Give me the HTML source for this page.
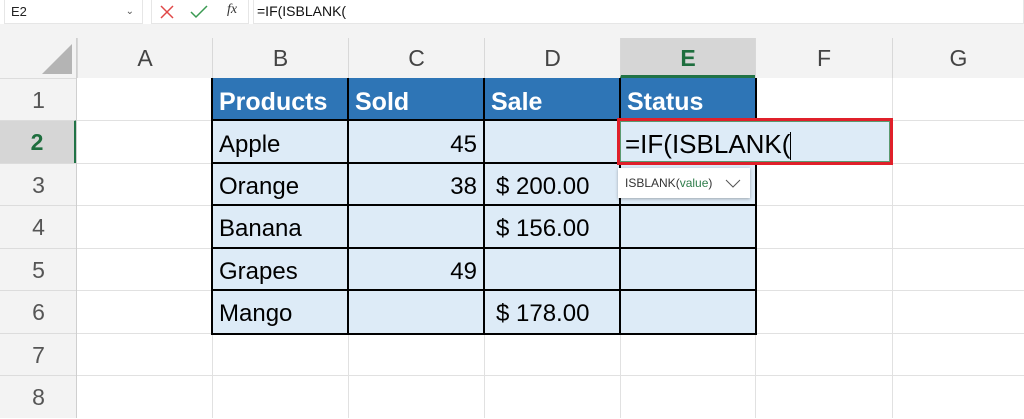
<!DOCTYPE html><html><head><style>
body{margin:0;width:1024px;height:418px;overflow:hidden;background:#fff;font-family:"Liberation Sans",sans-serif;position:relative}
div{position:absolute;box-sizing:border-box}
.ch{top:38px;height:40px;font-size:23px;color:#444;text-align:center;line-height:40px;border-left:1px solid #d8d8d8}
.rh{left:0;width:77px;font-size:23px;color:#555;text-align:center;background:#f3f3f3;border-top:1px solid #dcdcdc}
.vl{top:78px;height:340px;width:1px;background:#e1e1e1}
.hl{left:77px;width:947px;height:1px;background:#e1e1e1}
.c{font-size:24px;color:#000;line-height:42px;padding:0 6px;white-space:nowrap;margin-top:2px}
</style></head><body>
<div style="left:0;top:0;width:1024px;height:24px;background:#fff"></div>
<div style="left:0;top:24px;width:1024px;height:54px;background:#f3f3f3"></div>
<div style="left:4px;top:0;width:139px;height:24px;border:1px solid #e6e6e6;border-top:none;font-size:13px;line-height:24px;padding-left:6px;color:#222">E2<span style="position:absolute;right:8px;top:0;font-size:10px;color:#555">&#8964;</span></div>
<div style="left:151px;top:0;width:98px;height:24px;border:1px solid #e6e6e6;border-top:none"></div>
<svg style="position:absolute;left:160px;top:5px" width="14" height="14"><path d="M1 1L13 13M13 1L1 13" stroke="#e04848" stroke-width="1.5"/></svg>
<svg style="position:absolute;left:190px;top:5px" width="18" height="14"><path d="M1 7L6 12L17 1" stroke="#3a9a52" stroke-width="1.5" fill="none"/></svg>
<div style="left:227px;top:2px;font-family:'Liberation Serif',serif;font-style:italic;font-size:14px;color:#333">fx</div>
<div style="left:253px;top:0;width:771px;height:24px;border:1px solid #e6e6e6;border-top:none;font-size:14px;line-height:22px;padding-left:3px;color:#111">=IF(ISBLANK(</div>
<svg style="position:absolute;left:40px;top:44px" width="32" height="30"><path d="M32 0L32 30L2 30Z" fill="#b4b4b4"/></svg>
<div class="ch" style="left:77px;width:135px">A</div>
<div class="ch" style="left:212px;width:136px">B</div>
<div class="ch" style="left:348px;width:136px">C</div>
<div class="ch" style="left:484px;width:136px">D</div>
<div class="ch" style="left:620px;width:135px;background:#d6d6d6;color:#1e6e3e;font-weight:bold;border-bottom:3px solid #217346">E</div>
<div class="ch" style="left:755px;width:137px">F</div>
<div class="ch" style="left:892px;width:132px">G</div>
<div class="rh" style="top:78px;height:42px;line-height:42px">1</div>
<div class="rh" style="top:120px;height:43px;line-height:43px;background:#d6d6d6;color:#1e6e3e;font-weight:bold;border-right:3px solid #217346">2</div>
<div class="rh" style="top:163px;height:42px;line-height:42px">3</div>
<div class="rh" style="top:205px;height:43px;line-height:43px">4</div>
<div class="rh" style="top:248px;height:42px;line-height:42px">5</div>
<div class="rh" style="top:290px;height:43px;line-height:43px">6</div>
<div class="rh" style="top:333px;height:42px;line-height:42px">7</div>
<div class="rh" style="top:375px;height:43px;line-height:43px">8</div>
<div style="left:76px;top:38px;width:1px;height:380px;background:#cfcfcf"></div>
<div class="vl" style="left:212px"></div><div class="vl" style="left:348px"></div><div class="vl" style="left:484px"></div><div class="vl" style="left:620px"></div><div class="vl" style="left:755px"></div><div class="vl" style="left:892px"></div>
<div class="hl" style="top:120px"></div><div class="hl" style="top:163px"></div><div class="hl" style="top:205px"></div><div class="hl" style="top:248px"></div><div class="hl" style="top:290px"></div><div class="hl" style="top:333px"></div><div class="hl" style="top:375px"></div>
<div style="left:211px;top:78px;width:546px;height:257px;background:#ddebf7;border:2px solid #000"></div>
<div style="left:213px;top:78px;width:542px;height:42px;background:#2e75b6"></div>
<div style="left:211px;top:119px;width:546px;height:2px;background:#000"></div>
<div style="left:211px;top:162px;width:546px;height:2px;background:#000"></div>
<div style="left:211px;top:204px;width:546px;height:2px;background:#000"></div>
<div style="left:211px;top:247px;width:546px;height:2px;background:#000"></div>
<div style="left:211px;top:289px;width:546px;height:2px;background:#000"></div>
<div style="left:347px;top:78px;width:2px;height:257px;background:#000"></div>
<div style="left:483px;top:78px;width:2px;height:257px;background:#000"></div>
<div style="left:619px;top:78px;width:2px;height:257px;background:#000"></div>
<div class="c" style="left:213px;top:79px;color:#fff;font-weight:bold;font-size:25px">Products</div>
<div class="c" style="left:349px;top:79px;color:#fff;font-weight:bold;font-size:25px">Sold</div>
<div class="c" style="left:485px;top:79px;color:#fff;font-weight:bold;font-size:25px">Sale</div>
<div class="c" style="left:621px;top:79px;color:#fff;font-weight:bold;font-size:25px">Status</div>
<div class="c" style="left:213px;top:122px">Apple</div>
<div class="c" style="left:213px;top:164px">Orange</div>
<div class="c" style="left:213px;top:206px">Banana</div>
<div class="c" style="left:213px;top:249px">Grapes</div>
<div class="c" style="left:213px;top:291px">Mango</div>
<div class="c" style="left:349px;top:122px;width:134px;text-align:right">45</div>
<div class="c" style="left:349px;top:164px;width:134px;text-align:right">38</div>
<div class="c" style="left:349px;top:249px;width:134px;text-align:right">49</div>
<div class="c" style="left:490px;top:164px">$ 200.00</div>
<div class="c" style="left:490px;top:206px">$ 156.00</div>
<div class="c" style="left:490px;top:291px">$ 178.00</div>
<div style="left:617px;top:118px;width:276px;height:47px;border:3px solid #e0202a;background:#ddebf7"></div>
<div style="left:620px;top:121px;width:270px;height:41px;border:1px solid #5a9a70"></div>
<div class="c" style="left:621px;top:121px;padding-left:4px;font-size:26px">=IF(ISBLANK(<span style="display:inline-block;width:1px;height:28px;background:#000;vertical-align:middle"></span></div>
<div style="left:618px;top:168px;width:132px;height:30px;background:#fff;box-shadow:0 1px 3px rgba(0,0,0,.3);font-size:12px;line-height:30px;padding-left:7px;color:#333">ISBLANK(<span style="color:#2e7d4a">value</span>)<svg style="position:absolute;left:107px;top:11px" width="16" height="9"><path d="M1 1L8 8L15 1" stroke="#555" fill="none"/></svg></div>
</body></html>
